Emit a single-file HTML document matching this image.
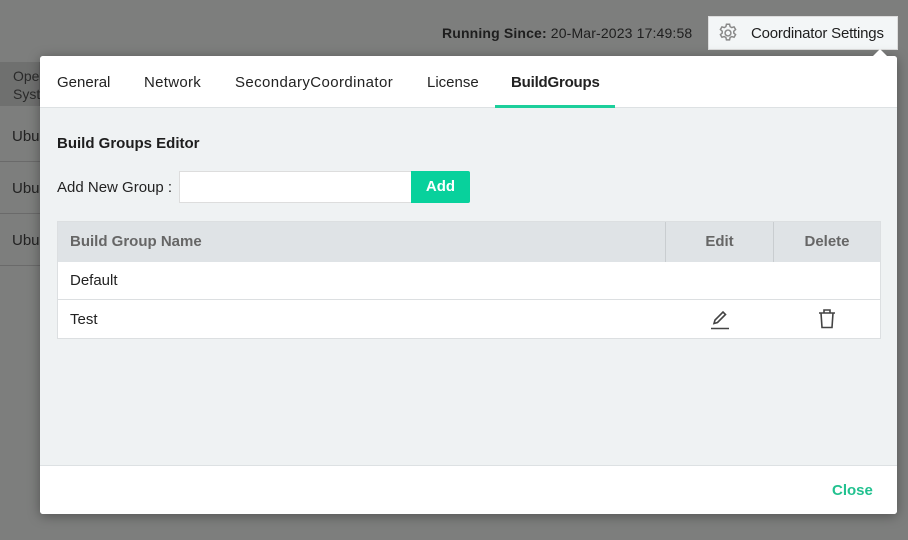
<!DOCTYPE html>
<html><head><meta charset="utf-8"><style>
*{box-sizing:border-box;margin:0;padding:0}
body{width:908px;height:540px;background:#7d7e7d;font-family:"Liberation Sans",sans-serif;position:relative;overflow:hidden;color:#222}
.abs{position:absolute}
</style></head><body>
<div class="abs" style="left:0;top:62px;width:40px;height:44px;background:#6f706f;border-right:1px solid #666"></div>
<div class="abs" style="left:13px;top:67px;font-size:14px;color:#2a2a2a;line-height:18px">Ope<br>Syst</div>
<div class="abs" style="left:0;top:161px;width:40px;height:1px;background:#6a6a6a"></div>
<div class="abs" style="left:0;top:213px;width:40px;height:1px;background:#6a6a6a"></div>
<div class="abs" style="left:0;top:265px;width:40px;height:1px;background:#6a6a6a"></div>
<div class="abs" style="left:12px;top:128px;font-size:15px;color:#222">Ubu</div>
<div class="abs" style="left:12px;top:180px;font-size:15px;color:#222">Ubu</div>
<div class="abs" style="left:12px;top:232px;font-size:15px;color:#222">Ubu</div>

<div class="abs" style="left:442px;top:25px;font-size:14px;color:#1e1e1e;white-space:nowrap;letter-spacing:0.15px"><b>Running Since:</b> 20-Mar-2023 17:49:58</div>
<div class="abs" style="left:708px;top:16px;width:190px;height:34px;background:#f3f6f7;border:1px solid #ddd"></div>
<svg class="abs" style="left:717px;top:22px" width="22" height="22" viewBox="0 0 24 24" fill="none" stroke="#888" stroke-width="1.6"><circle cx="12" cy="12" r="3.2"/><path d="M10.3 2.5h3.4l.6 2.6 1.8 1 2.5-.8 1.7 2.9-2 1.8v2l2 1.8-1.7 2.9-2.5-.8-1.8 1-.6 2.6h-3.4l-.6-2.6-1.8-1-2.5.8-1.7-2.9 2-1.8v-2l-2-1.8 1.7-2.9 2.5.8 1.8-1z"/></svg>
<div class="abs" style="left:751px;top:25px;font-size:15px;color:#1e1e1e;white-space:nowrap;letter-spacing:-0.2px">Coordinator Settings</div>

<div class="abs" style="left:40px;top:56px;width:857px;height:458px;background:#eff2f3;border-radius:3px;box-shadow:0 2px 12px rgba(0,0,0,.35);overflow:hidden">
  <div class="abs" style="left:0;top:0;width:857px;height:52px;background:#fff;border-bottom:1px solid #dde1e3"></div>
  <div class="abs" style="top:18px;left:17px;font-size:15px;color:#222">General</div>
  <div class="abs" style="top:18px;left:104px;font-size:15px;color:#222;letter-spacing:0.3px">Network</div>
  <div class="abs" style="top:18px;left:195px;font-size:15px;color:#222;letter-spacing:0.4px">SecondaryCoordinator</div>
  <div class="abs" style="top:18px;left:387px;font-size:15px;color:#222">License</div>
  <div class="abs" style="top:18px;left:471px;font-size:15px;color:#222;font-weight:bold;letter-spacing:-0.2px">BuildGroups</div>
  <div class="abs" style="top:49px;left:455px;width:120px;height:3px;background:#1ccf9b"></div>

  <div class="abs" style="top:79px;left:17px;font-size:15px;font-weight:bold;color:#1e1e1e">Build Groups Editor</div>
  <div class="abs" style="top:123px;left:17px;font-size:15px;color:#222">Add New Group :</div>
  <div class="abs" style="top:115px;left:139px;width:233px;height:32px;background:#fff;border:1px solid #ddd"></div>
  <div class="abs" style="top:115px;left:371px;width:59px;height:32px;background:#08d19c;border-radius:0 2px 2px 0;color:#fff;font-weight:bold;font-size:15px;text-align:center;line-height:32px">Add</div>

  <div class="abs" style="top:165px;left:17px;width:824px;height:118px;background:#fff;border:1px solid #dcdfe1">
    <div class="abs" style="left:0;top:0;width:822px;height:40px;background:#dfe3e6"></div>
    <div class="abs" style="left:607px;top:0;width:1px;height:40px;background:#c9cdd0"></div>
    <div class="abs" style="left:715px;top:0;width:1px;height:40px;background:#c9cdd0"></div>
    <div class="abs" style="left:12px;top:11px;font-size:15px;font-weight:bold;color:#666">Build Group Name</div>
    <div class="abs" style="left:608px;width:107px;top:11px;font-size:15px;font-weight:bold;color:#666;text-align:center">Edit</div>
    <div class="abs" style="left:716px;width:106px;top:11px;font-size:15px;font-weight:bold;color:#666;text-align:center">Delete</div>
    <div class="abs" style="left:12px;top:50px;font-size:15px;color:#222">Default</div>
    <div class="abs" style="left:0;top:77px;width:822px;height:1px;background:#dcdfe1"></div>
    <div class="abs" style="left:12px;top:89px;font-size:15px;color:#222">Test</div>
    <svg class="abs" style="left:651px;top:86px" width="22" height="22" viewBox="0 0 22 22" fill="none" stroke="#444" stroke-width="1.6"><path d="M5 15.5l1-3.5 8-8 2.5 2.5-8 8z M2 20.5h18"/></svg>
    <svg class="abs" style="left:759px;top:86px" width="20" height="22" viewBox="0 0 20 22" fill="none" stroke="#444" stroke-width="1.6"><path d="M2 5h16M7 5V2h6v3M4 5l1 14.5h10L16 5"/></svg>
  </div>

  <div class="abs" style="left:0;top:409px;width:857px;height:49px;background:#fff;border-top:1px solid #dde1e3"></div>
  <div class="abs" style="left:792px;top:426px;font-size:15px;font-weight:bold;color:#21c18f">Close</div>
</div>
<div class="abs" style="left:872px;top:49px;width:0;height:0;border-left:8px solid transparent;border-right:8px solid transparent;border-bottom:8px solid #fff"></div>
</body></html>
